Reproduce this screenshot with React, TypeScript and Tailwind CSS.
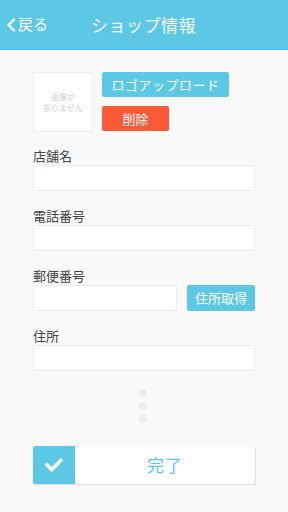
import { FaCheck } from 'react-icons/fa';

const font = { fontFamily: '"Noto Sans CJK JP", "Noto Sans", sans-serif' };

function Field({ label }: { label: string }) {
  return (
    <div>
      <p className="text-[13px] leading-[16px] text-[#444] mb-[1px]">{label}</p>
      <input className="w-full h-[26px] bg-white border border-[#ececec] outline-none" />
    </div>
  );
}

export default function App() {
  return (
    <div className="w-[288px] h-[512px] bg-[#f9f9f9] overflow-hidden" style={font}>
      {/* Header */}
      <header className="h-[50px] bg-[#5dc8e6] border-b border-[#4fbfdf] flex items-center relative">
        <button className="flex items-center pl-[6px] text-white text-[15px]">
          <svg width="11" height="14" viewBox="0 0 11 14" className="mr-[1px]">
            <path d="M8 1.5 L2.5 7 L8 12.5" stroke="white" strokeWidth="2.2" fill="none" strokeLinecap="round" />
          </svg>
          戻る
        </button>
        <h1 className="absolute left-[91px] text-white text-[17px] tracking-[0.5px]">ショップ情報</h1>
      </header>

      <main className="px-[33px] pt-[22px]">
        {/* Logo */}
        <div className="flex gap-[9px]">
          <div className="w-[60px] h-[60px] bg-white border border-[#eeeeee] flex items-center justify-center">
            <p className="text-[8px] leading-[11px] text-[#cfcfcf] text-center">
              画像が
              <br />
              ありません
            </p>
          </div>
          <div className="flex flex-col gap-[9px]">
            <button className="w-[127px] h-[25px] bg-[#5dc8e6] text-white text-[13px] rounded-[2px] tracking-[0.5px]">
              ロゴアップロード
            </button>
            <button className="w-[67px] h-[25px] bg-[#fb5a38] text-white text-[13px] rounded-[2px]">
              削除
            </button>
          </div>
        </div>

        <div className="mt-[16px] flex flex-col gap-[17px]">
          <Field label="店舗名" />
          <Field label="電話番号" />
          <div>
            <p className="text-[13px] leading-[16px] text-[#444] mb-[1px]">郵便番号</p>
            <div className="flex gap-[10px]">
              <input className="w-[144px] h-[26px] bg-white border border-[#ececec] outline-none" />
              <button className="w-[68px] h-[26px] bg-[#5dc8e6] text-white text-[13px] rounded-[2px]">
                住所取得
              </button>
            </div>
          </div>
          <Field label="住所" />
        </div>

        {/* Dots */}
        <div className="flex flex-col items-center gap-[5px] mt-[18px] pr-[2px]">
          <span className="w-[8px] h-[8px] rounded-full bg-[#ececec]" />
          <span className="w-[8px] h-[8px] rounded-full bg-[#ececec]" />
          <span className="w-[8px] h-[8px] rounded-full bg-[#ececec]" />
        </div>

        {/* Done */}
        <button className="mt-[23px] w-[222px] h-[38px] flex bg-white rounded-[2px] shadow-[1px_1px_1px_rgba(0,0,0,0.12)] overflow-hidden">
          <span className="w-[42px] h-full bg-[#5dc8e6] flex items-center justify-center">
            <FaCheck className="text-white w-[18px] h-[18px]" />
          </span>
          <span className="flex-1 flex items-center justify-center text-[#5dc8e6] text-[17px] tracking-[1px]">
            完了
          </span>
        </button>
      </main>
    </div>
  );
}
